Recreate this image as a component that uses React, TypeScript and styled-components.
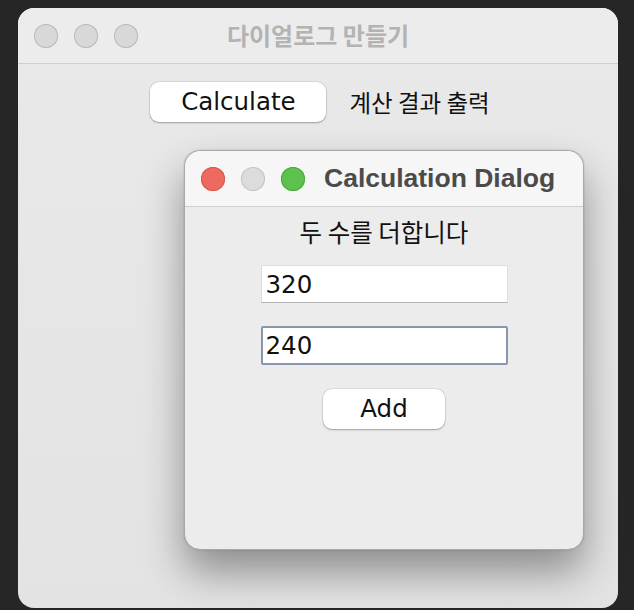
import styled, { createGlobalStyle } from 'styled-components';

const GlobalStyle = createGlobalStyle`
  html, body {
    margin: 0;
    padding: 0;
    background: #262626;
  }
  * {
    box-sizing: border-box;
  }
`;

const UI_FONT = `"DejaVu Sans", "Noto Sans CJK KR", sans-serif`;
const KO_FONT = `"Noto Sans CJK KR", "DejaVu Sans", sans-serif`;

const Desktop = styled.div`
  width: 634px;
  height: 610px;
  padding: 8px 16px 2px 18px;
  background: #262626;
`;

const Window = styled.div`
  position: relative;
  width: 600px;
  height: 600px;
  border-radius: 16px;
  background: linear-gradient(#e9e9e9, #e3e3e3);
  display: flex;
  flex-direction: column;
`;

const TitleBar = styled.div<{ $centered?: boolean; $bg: string }>`
  height: 56px;
  flex: 0 0 56px;
  display: grid;
  grid-template-columns: ${({ $centered }) => ($centered ? '1fr auto 1fr' : 'auto auto 1fr')};
  align-items: center;
  column-gap: 19px;
  padding: 0 16px;
  background: ${({ $bg }) => $bg};
  border-bottom: 1px solid #cfcfcf;
  border-radius: 16px 16px 0 0;
`;

const Lights = styled.div`
  display: flex;
  gap: 16px;
`;

const Light = styled.span<{ $color: string; $ring: string }>`
  width: 24px;
  height: 24px;
  border-radius: 50%;
  background: ${({ $color }) => $color};
  box-shadow: inset 0 0 0 1px ${({ $ring }) => $ring};
`;

const MainTitle = styled.div`
  font-family: ${KO_FONT};
  font-weight: 700;
  font-size: 24px;
  color: #b3b3b3;
  margin-top: -2px;
`;

const DialogTitle = styled.div`
  font-family: "Liberation Sans", Arial, sans-serif;
  font-weight: 700;
  font-size: 26.5px;
  color: #4b4b4b;
  white-space: nowrap;
`;

const Row = styled.div`
  display: flex;
  justify-content: center;
  align-items: center;
  gap: 23px;
  padding: 18px 0 0 4px;
`;

const PushButton = styled.button<{ $width: number }>`
  width: ${({ $width }) => $width}px;
  height: 40px;
  border: none;
  border-radius: 9px;
  background: #ffffff;
  box-shadow: 0 0 0 0.5px rgba(0, 0, 0, 0.12), 0 1px 2px rgba(0, 0, 0, 0.28);
  font-family: ${UI_FONT};
  font-size: 24.5px;
  color: #111;
  padding: 0;
  line-height: 40px;
`;

const Caption = styled.span<{ $size: number }>`
  font-family: ${KO_FONT};
  font-size: ${({ $size }) => $size}px;
  line-height: 1.4;
  color: #111;
`;

const Dialog = styled.div`
  position: absolute;
  left: 166px;
  top: 142px;
  width: 400px;
  height: 400px;
  border-radius: 16px;
  background: #ececec;
  border: 1px solid #a8a8a8;
  box-shadow: 0 22px 40px rgba(0, 0, 0, 0.38), 0 0 2px rgba(0, 0, 0, 0.2);
  display: flex;
  flex-direction: column;
`;

const DialogBody = styled.div`
  display: flex;
  flex-direction: column;
  align-items: center;
  padding-top: 8px;
`;

const Field = styled.div<{ $focused?: boolean }>`
  width: 247px;
  height: ${({ $focused }) => ($focused ? 39 : 38)}px;
  background: #ffffff;
  border: ${({ $focused }) => ($focused ? '2px solid #8797ad' : '1px solid #dedede')};
  border-bottom-color: ${({ $focused }) => ($focused ? '#8797ad' : '#b4b4b4')};
  border-radius: ${({ $focused }) => ($focused ? 2 : 0)}px;
  font-family: ${UI_FONT};
  font-size: 24.5px;
  color: #111;
  display: flex;
  align-items: center;
  padding-left: ${({ $focused }) => ($focused ? 3 : 4)}px;
`;

const Spacer = styled.div<{ $h: number }>`
  height: ${({ $h }) => $h}px;
`;

const App = () => {
  return (
    <>
      <GlobalStyle />
      <Desktop>
        <Window>
          <TitleBar $centered $bg="#ececec">
            <Lights>
              <Light $color="#d8d8d8" $ring="#b9b9b9" />
              <Light $color="#d8d8d8" $ring="#b9b9b9" />
              <Light $color="#d8d8d8" $ring="#b9b9b9" />
            </Lights>
            <MainTitle>다이얼로그 만들기</MainTitle>
            <span />
          </TitleBar>
          <Row>
            <PushButton $width={176}>Calculate</PushButton>
            <Caption $size={23.5}>계산 결과 출력</Caption>
          </Row>

          <Dialog>
            <TitleBar $bg="#f6f6f6">
              <Lights>
                <Light $color="#ee6a5e" $ring="#d9574c" />
                <Light $color="#dcdcdc" $ring="#c4c4c4" />
                <Light $color="#5dc14e" $ring="#4aa93c" />
              </Lights>
              <DialogTitle>Calculation Dialog</DialogTitle>
              <span />
            </TitleBar>
            <DialogBody>
              <Caption $size={24.5}>두 수를 더합니다</Caption>
              <Spacer $h={16} />
              <Field>320</Field>
              <Spacer $h={23} />
              <Field $focused>240</Field>
              <Spacer $h={24} />
              <PushButton $width={122}>Add</PushButton>
            </DialogBody>
          </Dialog>
        </Window>
      </Desktop>
    </>
  );
};

export default App;
